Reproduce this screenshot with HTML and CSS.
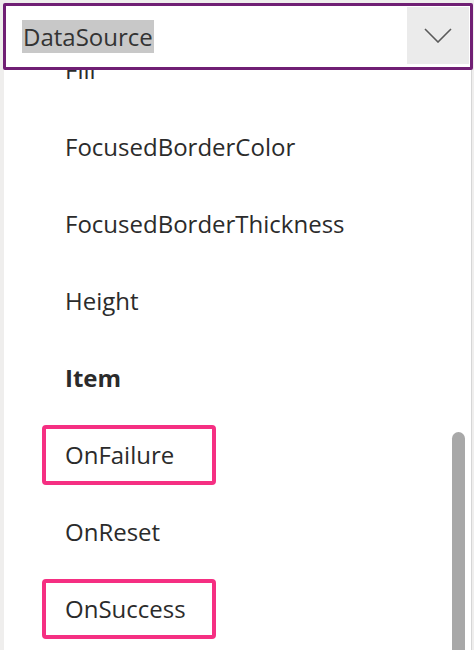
FILE: index.html
```html
<!DOCTYPE html>
<html>
<head>
<meta charset="utf-8">
<link rel="stylesheet" href="styles.css">
</head>
<body>
<div class="frame">
  <div class="combo">
    <div class="value"><span class="sel">DataSource</span></div>
    <div class="chev">
      <svg width="28" height="15" viewBox="0 0 28 15"><path d="M1 1 L14 14 L27 1" fill="none" stroke="#5a5a5a" stroke-width="1.6"/></svg>
    </div>
  </div>
  <div class="list">
    <div class="items">
      <div class="row"><span class="lbl">Fill</span></div>
      <div class="row"><span class="lbl">FocusedBorderColor</span></div>
      <div class="row"><span class="lbl">FocusedBorderThickness</span></div>
      <div class="row"><span class="lbl">Height</span></div>
      <div class="row"><span class="lbl bold">Item</span></div>
      <div class="row"><span class="lbl hl">OnFailure</span></div>
      <div class="row"><span class="lbl">OnReset</span></div>
      <div class="row"><span class="lbl hl">OnSuccess</span></div>
    </div>
    <div class="track"><div class="thumb"></div></div>
  </div>
</div>
</body>
</html>
```
FILE: styles.css
```css
html, body {
  margin: 0;
  padding: 0;
  height: 100%;
  overflow: hidden;
}
body {
  background: #efeeed;
  font-family: "Open Sans", "Noto Sans", sans-serif;
  color: #2b2b2b;
}
.frame {
  height: 650px;
  display: flex;
  flex-direction: column;
  padding-left: 3px;
  box-sizing: border-box;
}
.combo {
  margin: 3px 1px 0 0;
  height: 67px;
  box-sizing: border-box;
  border: 3px solid #701f74;
  border-radius: 2px;
  background: #fff;
  display: flex;
  position: relative;
  z-index: 1;
}
.value {
  flex: 1;
  display: flex;
  align-items: center;
  padding-left: 16px;
}
.sel {
  background: #c8c8c8;
  font-size: 24px;
  line-height: 33px;
  color: #333;
  padding: 0 1px;
}
.chev {
  width: 62px;
  background: #ebebeb;
  display: flex;
  align-items: center;
  justify-content: center;
  margin: 1px 1px 3px 0;
}
.list {
  flex: 1;
  display: flex;
  margin-left: 1px;
  margin-right: 2px;
  background: #fff;
  border-right: 1px solid #d6d6d6;
  overflow: hidden;
}
.items {
  flex: 1;
  margin-top: -39px;
}
.row {
  height: 77px;
  display: flex;
  align-items: center;
  padding-left: 38px;
}
.lbl {
  font-size: 24px;
  border: 4px solid transparent;
  padding: 0 0 0 19px;
  height: 60px;
  box-sizing: border-box;
  display: flex;
  align-items: center;
}
.bold {
  font-weight: 700;
}
.hl {
  border-color: #f52f82;
  border-radius: 4px;
  width: 174px;
}
.track {
  width: 13px;
  margin-right: 6px;
}
.thumb {
  margin-top: 362px;
  height: 300px;
  background: #a8a8a8;
  border-radius: 7px;
}
```
